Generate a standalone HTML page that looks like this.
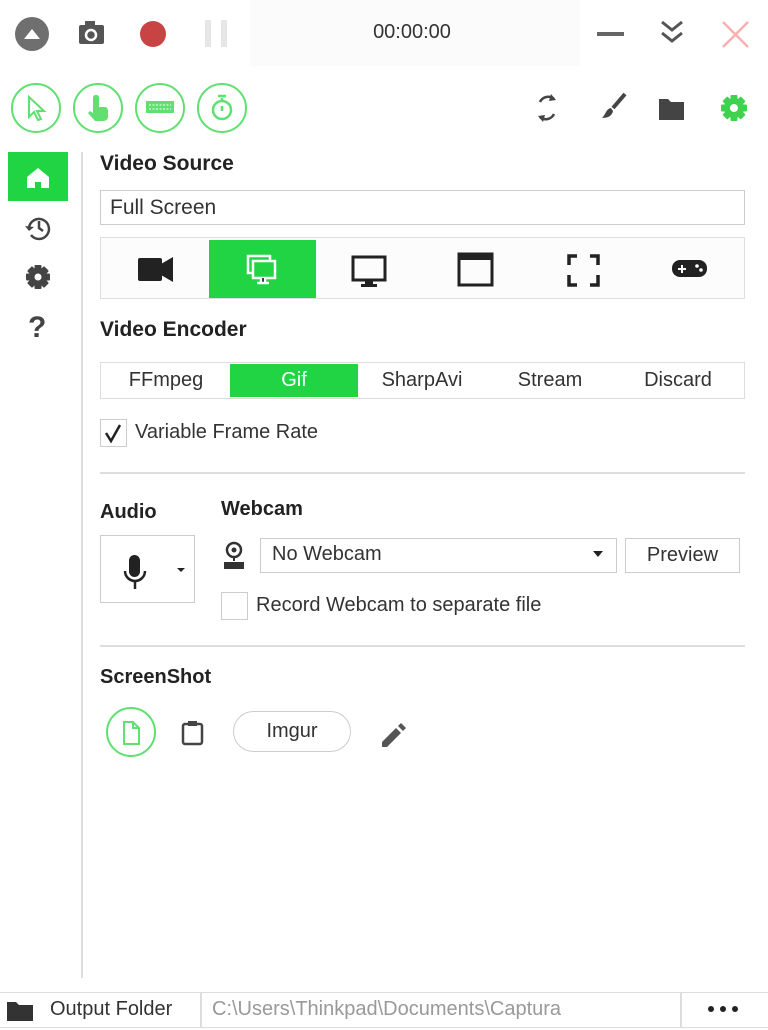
<!DOCTYPE html>
<html><head><meta charset="utf-8"><style>
*{margin:0;padding:0;box-sizing:border-box}
body{width:768px;height:1030px;background:#fff;position:relative;overflow:hidden;font-family:"Liberation Sans","Noto Sans CJK SC",sans-serif;color:#222}
.a{position:absolute}
.lbl{font-weight:bold;font-size:20px;color:#222}
.t{font-size:20px;color:#333}
.circ{position:absolute;width:50px;height:50px;border:2px solid #5fe070;border-radius:50%}
.tab{position:absolute;top:364px;height:33px;width:128px;text-align:center;line-height:33px;font-size:20px;color:#333}
</style></head><body>
<div class="a" style="left:250px;top:0;width:330px;height:66px;background:#fbfbfb"></div>
<svg class="a" style="left:0;top:0" width="768" height="140">
<circle cx="32" cy="34" r="17" fill="#6f6f6f"/><path d="M24 39h16l-8-10z" fill="#fff"/>
<rect x="79" y="25" width="25" height="19" rx="2" fill="#555"/><rect x="85" y="21" width="10" height="6" fill="#555"/><circle cx="91" cy="35" r="5" fill="none" stroke="#fff" stroke-width="2.5"/>
<circle cx="153" cy="34" r="13" fill="#c84444"/>
<rect x="205" y="20" width="6" height="27" fill="#e6e6e6"/><rect x="221" y="20" width="6" height="27" fill="#e6e6e6"/>
<rect x="597" y="32" width="27" height="4" fill="#666"/>
<path d="M662 22l10 8 10-8M662 33l10 8 10-8" fill="none" stroke="#555" stroke-width="3"/>
<path d="M723 22l25 25M748 22l-25 25" stroke="#f8b0b0" stroke-width="2.5"/>
<path d="M540 102a9 9 0 0 1 14-3M554 114a9 9 0 0 1-14 3" fill="none" stroke="#444" stroke-width="2.5"/><path d="M551 94l5 6-7 1zM543 122l-5-6 7-1z" fill="#444"/>
<path d="M625 94l-12 14" stroke="#444" stroke-width="4"/><path d="M611 108c-5 1-5 6-9 10 6 0 10-2 11-7z" fill="#444"/>
<path d="M659 99h9l3 3h13v18h-25z" fill="#444"/>
<g transform="translate(734 108)" fill="#3fd24f"><circle r="10"/><g id="tt"><rect x="-3.5" y="-13" width="7" height="26" rx="1"/><rect x="-13" y="-3.5" width="26" height="7" rx="1"/></g><use href="#tt" transform="rotate(45)"/><circle r="4" fill="#fff"/></g>
</svg>
<div class="a" style="left:352px;top:21px;width:120px;text-align:center;font-size:20px;color:#333">00:00:00</div>
<div class="circ" style="left:11px;top:83px"></div>
<div class="circ" style="left:73px;top:83px"></div>
<div class="circ" style="left:135px;top:83px"></div>
<div class="circ" style="left:197px;top:83px"></div>
<svg class="a" style="left:0;top:80px" width="260" height="60">
<path d="M29 17v20l5-5 4 8 3-1-4-8h7z" fill="none" stroke="#5fe070" stroke-width="2"/>
<path d="M96 15c2 0 3 1 3 3v9h6c2 0 3 2 3 4v6c0 3-3 4-5 4h-8l-7-8 2-2 3 2V18c0-2 1-3 3-3z" fill="#5fe070"/>
<rect x="146" y="21" width="28" height="12" fill="#5fe070"/><path d="M149 25h22M149 29h22" stroke="#fff" stroke-width="1" stroke-dasharray="2 1.5"/>
<circle cx="222" cy="30" r="9" fill="none" stroke="#5fe070" stroke-width="2.5"/><path d="M218 16h8M222 18v3M222 26v5" stroke="#5fe070" stroke-width="2.5"/>
</svg>
<div class="a" style="left:8px;top:152px;width:60px;height:49px;background:#21d443"></div>
<div class="a" style="left:81px;top:152px;width:2px;height:826px;background:#ddd"></div>
<svg class="a" style="left:0;top:150px" width="80" height="200">
<path d="M38 18l-11 9v11h22V27z" fill="#fff"/><path d="M35 38v-6h6v6" fill="#21d443"/>
<path d="M29 78a10 10 0 1 1 2 7" fill="none" stroke="#444" stroke-width="2.5"/><path d="M25 76l4 5 5-4z" fill="#444"/><path d="M39 71v7l4 3" fill="none" stroke="#444" stroke-width="2.5"/>
<g transform="translate(38 127)" fill="#444"><circle r="9"/><g id="t2"><rect x="-3.5" y="-12" width="7" height="24" rx="1"/><rect x="-12" y="-3.5" width="24" height="7" rx="1"/></g><use href="#t2" transform="rotate(45)"/><circle r="3.5" fill="#fff"/></g>
</svg>
<div class="a" style="left:28px;top:311px;font-size:30px;color:#444;font-weight:bold">?</div>
<div class="a lbl" style="left:100px;top:152px;font-size:21px">Video Source</div>
<div class="a" style="left:100px;top:190px;width:645px;height:35px;border:1.5px solid #ccc"></div>
<div class="a t" style="left:110px;top:196px;font-size:21px">Full Screen</div>
<div class="a" style="left:100px;top:237px;width:645px;height:62px;border:1.5px solid #ddd;background:#fcfcfc"></div>
<div class="a" style="left:209px;top:240px;width:107px;height:58px;background:#21d443"></div>
<svg class="a" style="left:100px;top:237px" width="645" height="62">
<rect x="38" y="21" width="24" height="23" rx="2" fill="#222"/><path d="M61 27l12-7v25l-12-7z" fill="#222"/>
<rect x="148" y="19" width="22" height="17" fill="none" stroke="#fff" stroke-width="2.5"/><rect x="153" y="24" width="22" height="17" fill="#21d443" stroke="#fff" stroke-width="2.5"/><path d="M161 41v5h-4h12h-4v-5" stroke="#fff" stroke-width="2.5"/>
<rect x="253" y="20" width="32" height="23" fill="none" stroke="#222" stroke-width="3"/><path d="M265 43h8v4h4v3h-16v-3h4z" fill="#222"/>
<rect x="359" y="17" width="33" height="31" fill="none" stroke="#222" stroke-width="3"/><rect x="359" y="17" width="33" height="6" fill="#222"/>
<path d="M469 28v-9h8M490 19h8v9M498 38v10h-8M477 48h-8v-10" fill="none" stroke="#222" stroke-width="3.5"/>
<rect x="572" y="23" width="35" height="17" rx="8" fill="#222"/><path d="M578 32h8M582 28v8" stroke="#fff" stroke-width="2"/><circle cx="597" cy="29" r="1.8" fill="#fff"/><circle cx="601" cy="33" r="1.8" fill="#fff"/>
</svg>
<div class="a lbl" style="left:100px;top:318px;font-size:21px">Video Encoder</div>
<div class="a" style="left:100px;top:362px;width:645px;height:37px;border:1.5px solid #ddd"></div>
<div class="a" style="left:230px;top:364px;width:128px;height:33px;background:#21d443"></div>
<div class="tab" style="left:102px">FFmpeg</div>
<div class="tab" style="left:230px;color:#fff">Gif</div>
<div class="tab" style="left:358px">SharpAvi</div>
<div class="tab" style="left:486px">Stream</div>
<div class="tab" style="left:614px">Discard</div>
<div class="a" style="left:100px;top:419px;width:27px;height:28px;border:1.5px solid #ccc"></div>
<svg class="a" style="left:100px;top:419px" width="27" height="28"><path d="M6 14l5 8 9-16" fill="none" stroke="#222" stroke-width="2.5"/></svg>
<div class="a t" style="left:135px;top:421px">Variable Frame Rate</div>
<div class="a" style="left:100px;top:472px;width:645px;height:2px;background:#ddd"></div>
<div class="a lbl" style="left:100px;top:501px">Audio</div>
<div class="a" style="left:100px;top:535px;width:95px;height:68px;border:1.5px solid #ccc"></div>
<svg class="a" style="left:100px;top:535px" width="95" height="68">
<rect x="29" y="20" width="11" height="22" rx="5.5" fill="#222"/><path d="M25 36a10 10 0 0 0 20 0M35 46v8" fill="none" stroke="#222" stroke-width="2.5"/>
<path d="M77 33h8l-4 4z" fill="#222"/>
</svg>
<div class="a lbl" style="left:221px;top:498px">Webcam</div>
<svg class="a" style="left:220px;top:540px" width="30" height="32">
<circle cx="14" cy="10" r="7" fill="none" stroke="#333" stroke-width="2.5"/><circle cx="14" cy="10" r="2.5" fill="#333"/><path d="M14 17v4M5 23h18v5H5z" fill="#333" stroke="#333" stroke-width="2"/>
</svg>
<div class="a" style="left:260px;top:538px;width:357px;height:35px;border:1.5px solid #ccc"></div>
<div class="a t" style="left:272px;top:543px">No Webcam</div>
<svg class="a" style="left:592px;top:550px" width="12" height="8"><path d="M1 1h10l-5 6z" fill="#222"/></svg>
<div class="a" style="left:625px;top:538px;width:115px;height:35px;border:1.5px solid #ccc;text-align:center;line-height:32px;font-size:20px;color:#333">Preview</div>
<div class="a" style="left:221px;top:592px;width:27px;height:28px;border:1.5px solid #ccc"></div>
<div class="a t" style="left:256px;top:594px">Record Webcam to separate file</div>
<div class="a" style="left:100px;top:645px;width:645px;height:2px;background:#ddd"></div>
<div class="a lbl" style="left:100px;top:666px">ScreenShot</div>
<div class="circ" style="left:106px;top:707px"></div>
<svg class="a" style="left:100px;top:700px" width="320" height="64">
<path d="M24 22h9l6 6v16H24z" fill="none" stroke="#5fe070" stroke-width="2"/><path d="M33 22v6h6" fill="none" stroke="#5fe070" stroke-width="2"/>
<rect x="83" y="24" width="19" height="20" rx="2" fill="none" stroke="#444" stroke-width="2.5"/><rect x="88" y="21" width="9" height="5" fill="#444"/>
<path d="M282 42l14-14 5 5-14 14h-5z" fill="#555"/><path d="M298 26l3-3 5 5-3 3z" fill="#555"/>
</svg>
<div class="a" style="left:233px;top:711px;width:118px;height:41px;border:1.5px solid #ccc;border-radius:21px;text-align:center;line-height:38px;font-size:20px;color:#333">Imgur</div>
<div class="a" style="left:0;top:992px;width:768px;height:36px;border-top:1.5px solid #ddd;border-bottom:1.5px solid #ddd"></div>
<div class="a" style="left:200px;top:993px;width:1.5px;height:34px;background:#ddd"></div>
<div class="a" style="left:680px;top:993px;width:1.5px;height:34px;background:#ddd"></div>
<svg class="a" style="left:5px;top:999px" width="30" height="24"><path d="M2 3h9l3 3h14v16H2z" fill="#333"/></svg>
<div class="a t" style="left:50px;top:998px">Output Folder</div>
<div class="a" style="left:212px;top:998px;font-size:20px;color:#999">C:\Users\Thinkpad\Documents\Captura</div>
<svg class="a" style="left:706px;top:1004px" width="34" height="10"><circle cx="5" cy="5" r="3" fill="#222"/><circle cx="17" cy="5" r="3" fill="#222"/><circle cx="29" cy="5" r="3" fill="#222"/></svg>
</body></html>
